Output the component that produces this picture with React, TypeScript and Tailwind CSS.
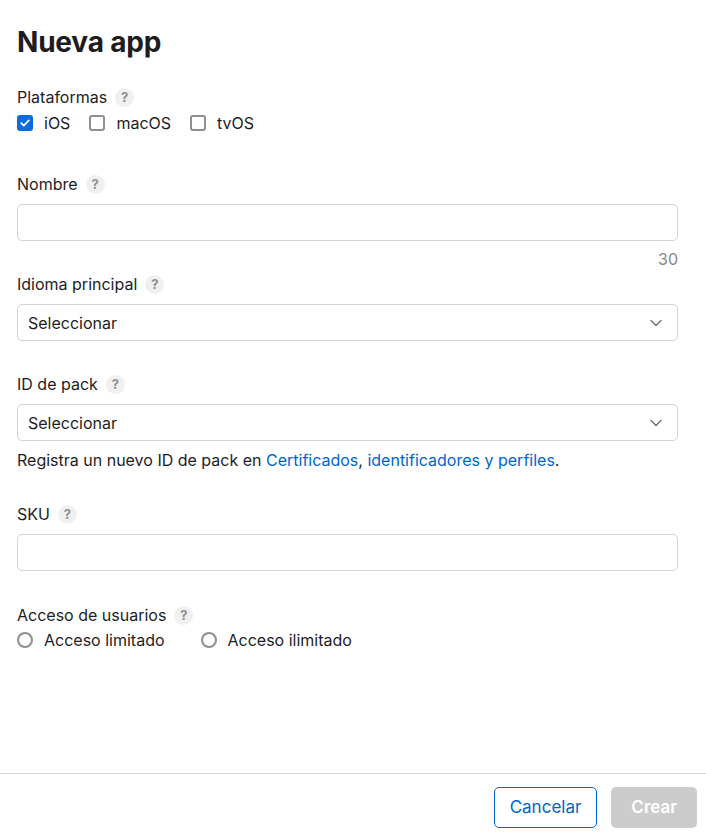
import React, { useState } from 'react';

const Help: React.FC = () => (
  <span className="ml-[8px] inline-flex h-[19px] w-[19px] items-center justify-center rounded-full bg-[#f0f0f0] text-[13px] font-bold text-[#8e8e93]">
    ?
  </span>
);

const Label: React.FC<{ text: string }> = ({ text }) => (
  <div className="flex items-center text-[16px] leading-[20px] text-[#1d1d1f]">
    {text}
    <Help />
  </div>
);

const Chevron: React.FC = () => (
  <svg width="14" height="14" viewBox="0 0 14 14" fill="none" className="text-[#6e6e73]">
    <path d="M2 4.5 L7 9.5 L12 4.5" stroke="currentColor" strokeWidth="1.4" strokeLinecap="round" strokeLinejoin="round" />
  </svg>
);

const Select: React.FC = () => (
  <div className="flex h-[37px] items-center justify-between rounded-[5px] border border-[#d2d2d7] pl-[10px] pr-[14px] text-[16px] text-[#1d1d1f]">
    <span>Seleccionar</span>
    <Chevron />
  </div>
);

const Check: React.FC<{ label: string; checked?: boolean }> = ({ label, checked }) => (
  <label className="flex items-center">
    {checked ? (
      <span className="flex h-[16px] w-[16px] items-center justify-center rounded-[3px] bg-[#0a6cde]">
        <svg width="12" height="12" viewBox="0 0 12 12" fill="none">
          <path d="M2.3 6.2 L4.8 8.6 L9.8 3.4" stroke="white" strokeWidth="1.8" strokeLinecap="round" strokeLinejoin="round" />
        </svg>
      </span>
    ) : (
      <span className="h-[16px] w-[16px] rounded-[3px] border-2 border-[#8e8e93] bg-white" />
    )}
    <span className="ml-[11px] text-[16px] text-[#1d1d1f]">{label}</span>
  </label>
);

const Radio: React.FC<{ label: string }> = ({ label }) => (
  <label className="flex items-center">
    <span className="h-[16px] w-[16px] rounded-full border-2 border-[#8e8e93] bg-white" />
    <span className="ml-[11px] text-[16px] text-[#1d1d1f]">{label}</span>
  </label>
);

export default function App() {
  const [nombre, setNombre] = useState('');
  const [sku, setSku] = useState('');

  return (
    <div className="flex h-[834px] w-[706px] flex-col bg-white font-['Inter',sans-serif] text-[#1d1d1f]">
      <div className="flex-1 pl-[17px] pr-[28px]">
        <h1 className="pt-[24px] text-[28px] font-bold leading-[36px] tracking-[-0.2px]">Nueva app</h1>

        <div className="mt-[27px]">
          <Label text="Plataformas" />
          <div className="mt-[6px] flex items-center gap-[19px] leading-[20px]">
            <Check label="iOS" checked />
            <Check label="macOS" />
            <Check label="tvOS" />
          </div>
        </div>

        <div className="mt-[41px]">
          <Label text="Nombre" />
          <input
            value={nombre}
            onChange={e => setNombre(e.target.value)}
            className="mt-[10px] h-[37px] w-full rounded-[5px] border border-[#d2d2d7] px-[10px] text-[16px] outline-none"
          />
          <div className="mt-[8px] text-right text-[16px] leading-[20px] text-[#86868b]">30</div>
        </div>

        <div className="mt-[5px]">
          <Label text="Idioma principal" />
          <div className="mt-[10px]">
            <Select />
          </div>
        </div>

        <div className="mt-[33px]">
          <Label text="ID de pack" />
          <div className="mt-[10px]">
            <Select />
          </div>
          <p className="mt-[9px] text-[16px] leading-[20px]">
            Registra un nuevo ID de pack en <span className="text-[#0066cc]">Certificados</span>,{' '}
            <span className="text-[#0066cc]">identificadores y perfiles</span>.
          </p>
        </div>

        <div className="mt-[34px]">
          <Label text="SKU" />
          <input
            value={sku}
            onChange={e => setSku(e.target.value)}
            className="mt-[10px] h-[37px] w-full rounded-[5px] border border-[#d2d2d7] px-[10px] text-[16px] outline-none"
          />
        </div>

        <div className="mt-[34px]">
          <Label text="Acceso de usuarios" />
          <div className="mt-[5px] flex items-center gap-[36px] leading-[20px]">
            <Radio label="Acceso limitado" />
            <Radio label="Acceso ilimitado" />
          </div>
        </div>
      </div>

      <div className="flex h-[61px] items-start justify-end gap-[14px] border-t border-[#d2d2d7] pr-[9px] pt-[13px]">
        <button className="h-[41px] rounded-[5px] border border-[#0066cc] px-[15px] text-[17px] text-[#0066cc]">
          Cancelar
        </button>
        <button className="h-[41px] rounded-[5px] bg-[#cccccc] px-[20px] text-[17px] font-semibold text-white">
          Crear
        </button>
      </div>
    </div>
  );
}
